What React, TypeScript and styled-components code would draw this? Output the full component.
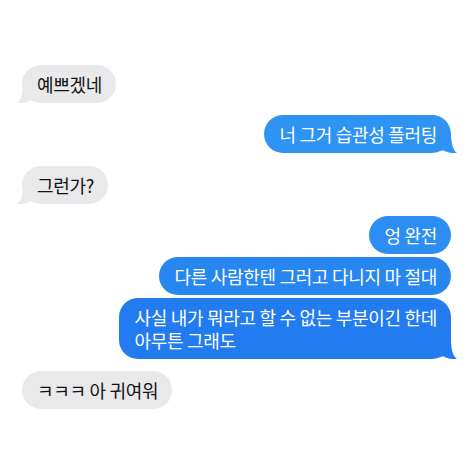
import React from "react";
import styled, { createGlobalStyle } from "styled-components";

const Global = createGlobalStyle`
  html, body {
    margin: 0;
    padding: 0;
    background: #ffffff;
  }
  body {
    font-family: "Noto Sans CJK KR", "Noto Sans", sans-serif;
  }
`;

const Thread = styled.div`
  display: flex;
  flex-direction: column;
  padding: 65px 23px 0 22px;
  width: 474px;
  height: 474px;
  box-sizing: border-box;
`;

const Row = styled.div<{ $me?: boolean; $gap: number }>`
  display: flex;
  justify-content: ${(p) => (p.$me ? "flex-end" : "flex-start")};
  margin-top: ${(p) => p.$gap}px;
`;

const Bubble = styled.div<{ $me?: boolean; $bg: string }>`
  position: relative;
  background: ${(p) => p.$bg};
  color: ${(p) => (p.$me ? "#ffffff" : "#111111")};
  font-size: 18px;
  letter-spacing: -0.3px;
  line-height: 23px;
  padding: 8px 14px 7px 15px;
  border-radius: 19px;
  white-space: nowrap;
`;

const TailSvg = styled.svg<{ $me?: boolean }>`
  position: absolute;
  bottom: 0;
  width: 16px;
  height: 20px;
  ${(p) => (p.$me ? "right: -6px;" : "left: -5px; transform: scaleX(-1);")}
`;

const Tail = ({ me, color }: { me?: boolean; color: string }) => (
  <TailSvg $me={me} viewBox="0 0 16 20">
    <path
      d="M0 0 L10 0 C10 11 12 17 16 20 C11 20.5 6 19.5 3 17.5 L0 17.5 Z"
      fill={color}
    />
  </TailSvg>
);

type Msg = {
  me?: boolean;
  gap: number;
  bg: string;
  tail?: boolean;
  text: React.ReactNode;
};

const GRAY = "#E9E9EB";

const messages: Msg[] = [
  { gap: 0, bg: GRAY, tail: true, text: "예쁘겠네" },
  { me: true, gap: 12, bg: "#2F93F4", tail: true, text: "너 그거 습관성 플러팅" },
  { gap: 13, bg: GRAY, tail: true, text: "그런가?" },
  { me: true, gap: 12, bg: "#2C8DF3", text: "엉 완전" },
  { me: true, gap: 3, bg: "#2886F1", text: "다른 사람한텐 그러고 다니지 마 절대" },
  {
    me: true,
    gap: 3,
    bg: "#227CEF",
    tail: true,
    text: (
      <>
        사실 내가 뭐라고 할 수 없는 부분이긴 한데
        <br />
        아무튼 그래도
      </>
    ),
  },
  { gap: 12, bg: GRAY, text: "ㅋㅋㅋ 아 귀여워" },
];

export default function App() {
  return (
    <>
      <Global />
      <Thread>
        {messages.map((m, i) => (
          <Row key={i} $me={m.me} $gap={m.gap}>
            <Bubble $me={m.me} $bg={m.bg}>
              {m.text}
              {m.tail && <Tail me={m.me} color={m.bg} />}
            </Bubble>
          </Row>
        ))}
      </Thread>
    </>
  );
}
